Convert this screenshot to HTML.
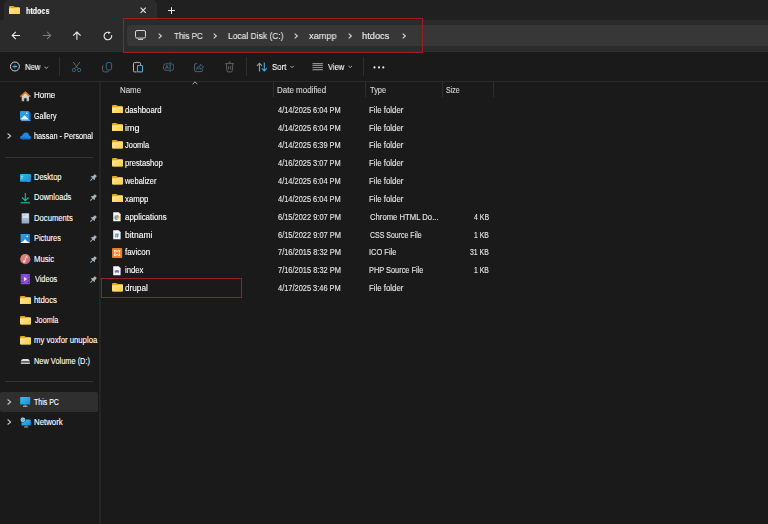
<!DOCTYPE html>
<html><head><meta charset="utf-8"><style>
html,body{margin:0;padding:0;}
body{width:768px;height:524px;overflow:hidden;background:#1a1a1a;position:relative;font-family:"Liberation Sans",sans-serif;}
body>div,body>svg{position:absolute;}
.t{white-space:nowrap;line-height:normal;-webkit-text-stroke:0.12px currentColor;}
</style></head><body>
<svg width="0" height="0" style="position:absolute"><defs><linearGradient id="fg" x1="0" y1="0" x2="1" y2="1"><stop offset="0" stop-color="#ffe79a"/><stop offset="1" stop-color="#fccf4a"/></linearGradient><linearGradient id="dg" x1="0" y1="0" x2="1" y2="1"><stop offset="0" stop-color="#2bc4ec"/><stop offset="1" stop-color="#1a86d6"/></linearGradient><linearGradient id="pg" x1="0" y1="0" x2="1" y2="1"><stop offset="0" stop-color="#2cc8ef"/><stop offset="1" stop-color="#1a8ada"/></linearGradient><linearGradient id="mg" x1="0" y1="0" x2="1" y2="1"><stop offset="0" stop-color="#f39056"/><stop offset="1" stop-color="#c25a9e"/></linearGradient><linearGradient id="docg" x1="0" y1="0" x2="0" y2="1"><stop offset="0" stop-color="#c3d1e3"/><stop offset="1" stop-color="#8ea5c2"/></linearGradient><linearGradient id="picg" x1="0" y1="0" x2="1" y2="1"><stop offset="0" stop-color="#2aa6ec"/><stop offset="1" stop-color="#1679d2"/></linearGradient><linearGradient id="hg" x1="0" y1="0" x2="0" y2="1"><stop offset="0" stop-color="#e6e6e6"/><stop offset="1" stop-color="#b4b4b4"/></linearGradient></defs></svg>
<div style="left:0px;top:0px;width:768px;height:20px;background:#202020;"></div>
<div style="left:3.7px;top:0px;width:153.7px;height:21px;background:#2b2b2b;border-radius:5px 5px 0 0;"></div>
<div style="left:0px;top:12px;width:10px;height:9px;background:#2b2b2b;"></div>
<div style="left:0px;top:0px;width:3.7px;height:19.6px;background:#202020;border-radius:0 0 3px 0;"></div>
<div style="left:0px;top:20px;width:768px;height:32px;background:#2b2b2b;"></div>
<div style="left:0px;top:51px;width:768px;height:1px;background:#2f2f2f;"></div>
<div style="left:127.2px;top:25.2px;width:641px;height:20.6px;background:#373737;border-radius:4px 0 0 4px;"></div>
<div style="left:99px;top:82px;width:2px;height:442px;background:linear-gradient(90deg,#272727,#212121);"></div>
<div style="left:0px;top:81px;width:768px;height:1px;background:#2b2b2b;"></div>
<svg style="left:9.3px;top:5.5px" width="11" height="8.5" viewBox="0 0 11 8.5"><path d="M0 1.1 Q0 0 1.1 0 H4.3 Q4.9 0 5.3 0.5 L5.7 1.2 H9.9 Q11 1.2 11 2.3 V7.4 Q11 8.5 9.9 8.5 H1.1 Q0 8.5 0 7.4Z" fill="#e9a90a"/><path d="M0 3.2 Q0 2.2 1 2.2 H4.9 L5.9 1.5 H10 Q11 1.5 11 2.5 V7.5 Q11 8.5 10 8.5 H1 Q0 8.5 0 7.5Z" fill="url(#fg)"/></svg>
<div class="t" style="left:26.20px;top:5.62px;font-size:8.6px;font-weight:700;color:#ffffff;transform:scaleX(0.8309);transform-origin:0 0;will-change:transform;">htdocs</div>
<svg style="left:140px;top:7px" width="7" height="7" viewBox="0 0 7 7"><path d="M0.6 0.6 L5.8 5.8 M5.8 0.6 L0.6 5.8" stroke="#e8e8e8" stroke-width="1.1"/></svg>
<svg style="left:167px;top:7px" width="8" height="8" viewBox="0 0 8 8"><path d="M4.5 0.2 V7 M1 3.5 H7.9" stroke="#e8e8e8" stroke-width="1"/></svg>
<svg style="left:11px;top:31px" width="10" height="9" viewBox="0 0 10 9"><path d="M1.2 4.5 H9 M4.8 0.9 L1.2 4.5 L4.8 8.1" stroke="#ececec" stroke-width="1.1" fill="none"/></svg>
<svg style="left:42px;top:31px" width="10" height="9" viewBox="0 0 10 9"><path d="M0.8 4.5 H8.7 M5.1 0.9 L8.7 4.5 L5.1 8.1" stroke="#7a7a7a" stroke-width="1.1" fill="none"/></svg>
<svg style="left:72px;top:31px" width="10" height="10" viewBox="0 0 10 10"><path d="M4.9 1.2 V8.8 M1.2 4.7 L4.9 1.0 L8.6 4.7" stroke="#ececec" stroke-width="1.1" fill="none"/></svg>
<svg style="left:103px;top:31px" width="10" height="10" viewBox="0 0 10 10"><path d="M4.9 1.2 A3.8 3.8 0 1 0 8.6 4.2" stroke="#ececec" stroke-width="1.1" fill="none"/><path d="M4.9 0.4 L7.9 1.3 L5.4 3.2Z" fill="#ececec"/></svg>
<svg style="left:134.7px;top:29.7px" width="11" height="10.5" viewBox="0 0 11 10.5"><rect x="0.5" y="0.5" width="10" height="7.6" rx="1.5" stroke="#d8d8d8" stroke-width="1" fill="none"/><path d="M3 9.6 H8" stroke="#d8d8d8" stroke-width="1"/></svg>
<svg style="left:157.6px;top:32.8px" width="5" height="7" viewBox="0 0 5 7"><path d="M0.7 0.6 L3.4 3.0 L0.7 5.4" stroke="#dcdcdc" stroke-width="1.05" fill="none"/></svg>
<svg style="left:213.2px;top:32.8px" width="5" height="7" viewBox="0 0 5 7"><path d="M0.7 0.6 L3.4 3.0 L0.7 5.4" stroke="#dcdcdc" stroke-width="1.05" fill="none"/></svg>
<svg style="left:294.3px;top:32.8px" width="5" height="7" viewBox="0 0 5 7"><path d="M0.7 0.6 L3.4 3.0 L0.7 5.4" stroke="#dcdcdc" stroke-width="1.05" fill="none"/></svg>
<svg style="left:348px;top:32.8px" width="5" height="7" viewBox="0 0 5 7"><path d="M0.7 0.6 L3.4 3.0 L0.7 5.4" stroke="#dcdcdc" stroke-width="1.05" fill="none"/></svg>
<svg style="left:401.6px;top:32.8px" width="5" height="7" viewBox="0 0 5 7"><path d="M0.7 0.6 L3.4 3.0 L0.7 5.4" stroke="#dcdcdc" stroke-width="1.05" fill="none"/></svg>
<div class="t" style="left:173.83px;top:30.58px;font-size:9.3px;font-weight:400;color:#ececec;transform:scaleX(0.8708);transform-origin:0 0;will-change:transform;">This PC</div>
<div class="t" style="left:227.97px;top:30.58px;font-size:9.3px;font-weight:400;color:#ececec;transform:scaleX(0.9111);transform-origin:0 0;will-change:transform;">Local Disk (C:)</div>
<div class="t" style="left:309.00px;top:30.58px;font-size:9.3px;font-weight:400;color:#ececec;transform:scaleX(0.9854);transform-origin:0 0;will-change:transform;">xampp</div>
<div class="t" style="left:362.30px;top:30.58px;font-size:9.3px;font-weight:400;color:#ececec;transform:scaleX(0.9962);transform-origin:0 0;will-change:transform;">htdocs</div>
<div style="left:122.9px;top:18.0px;width:300.4px;height:35.1px;background:transparent;border:1.5px solid #981f23;box-sizing:border-box;"></div>
<svg style="left:9px;top:61px" width="12" height="12" viewBox="0 0 12 12"><circle cx="5.9" cy="5.5" r="4.5" stroke="#cfcfcf" stroke-width="1" fill="none"/><path d="M5.9 3.4 V7.6" stroke="#2f7fb0" stroke-width="1"/><path d="M3.6 5.5 H8.2" stroke="#46a8e0" stroke-width="1.3"/></svg>
<div class="t" style="left:25.11px;top:61.81px;font-size:8.5px;font-weight:400;color:#ffffff;transform:scaleX(0.9080);transform-origin:0 0;will-change:transform;">New</div>
<svg style="left:44.4px;top:65.5px" width="5" height="4" viewBox="0 0 5 4"><path d="M0.4 0.6 L2.2 2.6 L4 0.6" stroke="#cfcfcf" stroke-width="0.8" fill="none"/></svg>
<div style="left:59.3px;top:57px;width:1px;height:19px;background:#2e2e2e;"></div>
<svg style="left:71px;top:61px" width="11" height="12" viewBox="0 0 11 12"><path d="M2.2 1 L6.6 7.2 M8.8 1 L4.4 7.2" stroke="#6c6c6c" stroke-width="0.9" fill="none"/><circle cx="2.9" cy="9" r="1.65" stroke="#2b6a8a" stroke-width="1" fill="none"/><circle cx="8.1" cy="9" r="1.65" stroke="#2b6a8a" stroke-width="1" fill="none"/></svg>
<svg style="left:101px;top:61px" width="12" height="12" viewBox="0 0 12 12"><path d="M2.6 4 Q1.5 4.6 1.5 6 V8.6 Q1.5 10.9 3.8 10.9 H6.3 Q7.6 10.9 8.3 10" stroke="#5f5f5f" stroke-width="1" fill="none"/><rect x="5.3" y="1.5" width="5.3" height="7.6" rx="1.8" stroke="#2d6f8e" stroke-width="1" fill="none"/></svg>
<svg style="left:132px;top:61px" width="12" height="12" viewBox="0 0 12 12"><path d="M3.2 1.5 H2.6 Q1.5 1.5 1.5 2.6 V9.9 Q1.5 10.9 2.5 10.9 H4.6 M6.8 1.5 H7.5 Q8.5 1.5 8.5 2.6 V3.9" stroke="#bdbdbd" stroke-width="1" fill="none"/><path d="M3 1.9 Q5 0.3 7 1.9" stroke="#bdbdbd" stroke-width="1" fill="none"/><rect x="5.5" y="4.5" width="5" height="6.4" rx="0.7" stroke="#46a6d8" stroke-width="1.1" fill="none"/></svg>
<svg style="left:162px;top:61px" width="12" height="12" viewBox="0 0 12 12"><rect x="1.5" y="2.8" width="10.3" height="6.6" rx="2.4" stroke="#5a5a5a" stroke-width="1" fill="none"/><path d="M8.1 1 V11" stroke="#1c1c1c" stroke-width="2"/><path d="M8.1 1 V11" stroke="#2d6a8a" stroke-width="1.1"/><path d="M3.4 8 L4.9 4.2 L6.4 8 M3.9 6.8 H5.9" stroke="#2d6a8a" stroke-width="0.9" fill="none"/></svg>
<svg style="left:193px;top:61px" width="12" height="12" viewBox="0 0 12 12"><path d="M4.2 2.6 H3 Q1.5 2.6 1.5 4.1 V9.1 Q1.5 10.6 3 10.6 H8 Q9.5 10.6 9.5 9.1 V8.2" stroke="#5c5c5c" stroke-width="1" fill="none"/><path d="M3.4 8.4 Q3.8 5.3 7.3 5 V3.4 L10.6 5.9 L7.3 8.3 V6.8 Q5 6.8 3.4 8.4Z" stroke="#2d6a8a" stroke-width="0.9" fill="none" stroke-linejoin="round"/></svg>
<svg style="left:224px;top:61px" width="12" height="12" viewBox="0 0 12 12"><path d="M1.2 2.6 H10 M4.3 2.4 Q4.6 0.8 5.6 0.8 Q6.6 0.8 6.9 2.4 M2.3 2.8 L3 10 Q3.1 10.9 4 10.9 H7.2 Q8.1 10.9 8.2 10 L8.9 2.8 M4.6 5.2 V8.4 M6.6 5.2 V8.4" stroke="#5e5e5e" stroke-width="1" fill="none"/></svg>
<div style="left:246.3px;top:57px;width:1px;height:19px;background:#2e2e2e;"></div>
<svg style="left:256px;top:62px" width="12" height="11" viewBox="0 0 12 11"><path d="M3.5 9.6 V1.4 M1 3.8 L3.5 1.2 L6 3.8" stroke="#9a9a9a" stroke-width="1.1" fill="none"/><path d="M8.3 0.6 V8.8 M5.8 6.4 L8.3 9 L10.8 6.4" stroke="#3fa8e0" stroke-width="1.1" fill="none"/></svg>
<div class="t" style="left:272.13px;top:61.81px;font-size:8.5px;font-weight:400;color:#ffffff;transform:scaleX(0.9139);transform-origin:0 0;will-change:transform;">Sort</div>
<svg style="left:290px;top:65px" width="5" height="4" viewBox="0 0 5 4"><path d="M0.4 0.9 L2.1 2.6 L3.8 0.9" stroke="#cfcfcf" stroke-width="0.8" fill="none"/></svg>
<svg style="left:312px;top:63px" width="12" height="9" viewBox="0 0 12 9"><path d="M0.5 0.6 H10.9 M0.5 2.5 H10.9 M0.5 4.5 H10.9 M0.5 6.6 H10.9" stroke="#8e8e8e" stroke-width="1.1" fill="none"/></svg>
<div class="t" style="left:328.11px;top:61.81px;font-size:8.5px;font-weight:400;color:#ffffff;transform:scaleX(0.8791);transform-origin:0 0;will-change:transform;">View</div>
<svg style="left:348px;top:65px" width="5" height="4" viewBox="0 0 5 4"><path d="M0.4 0.9 L2.2 2.6 L4 0.9" stroke="#cfcfcf" stroke-width="0.8" fill="none"/></svg>
<div style="left:363px;top:57px;width:1px;height:19px;background:#2e2e2e;"></div>
<svg style="left:373px;top:65px" width="13" height="5" viewBox="0 0 13 5"><circle cx="1.5" cy="2.4" r="1.05" fill="#f0f0f0"/><circle cx="6.0" cy="2.4" r="1.05" fill="#f0f0f0"/><circle cx="10.3" cy="2.4" r="1.05" fill="#f0f0f0"/></svg>
<div style="left:0px;top:391.5px;width:98.1px;height:20px;background:#2f2f2f;border-radius:2px;"></div>
<div style="left:5.2px;top:156.9px;width:88px;height:0.9px;background:#333;"></div>
<div style="left:5.2px;top:381.1px;width:88px;height:0.9px;background:#333;"></div>
<svg style="left:20.2px;top:90.95px" width="11" height="11" viewBox="0 0 11 11"><path d="M1.7 5.4 L5.4 2.1 L9.1 5.4 V9.6 Q9.1 10.2 8.5 10.2 H6.6 V7.3 H4.2 V10.2 H2.3 Q1.7 10.2 1.7 9.6Z" fill="url(#hg)"/><path d="M5.4 0.3 L10.9 5.1 L9.9 6.2 L5.4 2.3 L0.9 6.2 L-0.1 5.1Z" fill="#f07a1c"/></svg>
<div class="t" style="left:33.93px;top:90.34px;font-size:8.3px;font-weight:400;color:#ffffff;transform:scaleX(0.9621);transform-origin:0 0;">Home</div>
<svg style="left:20.2px;top:110.97px" width="11" height="11" viewBox="0 0 11 11"><rect x="1.4" y="1.2" width="9.3" height="8.8" rx="0.8" fill="#1565b8"/><rect x="0" y="0" width="9.2" height="8.8" rx="0.8" fill="#2a9ae6"/><path d="M0.3 8.4 L4.6 4.2 L8.9 8.4Z" fill="#ffffff"/><circle cx="6.8" cy="2.2" r="0.8" fill="#fff"/><path d="M1 9.6 H10.4" stroke="#8fd0ff" stroke-width="0.6"/></svg>
<div class="t" style="left:34.26px;top:110.76px;font-size:8.3px;font-weight:400;color:#ffffff;transform:scaleX(0.8533);transform-origin:0 0;">Gallery</div>
<svg style="left:20.2px;top:131.09px" width="11" height="11" viewBox="0 0 11 11"><path d="M2.3 8.3 Q0 8.3 0.1 6.3 Q0.3 4.6 2.3 4.5 Q3.2 1.5 6.1 1.4 Q8.8 1.5 9.3 4.4 Q10.9 4.7 10.9 6.4 Q10.8 8.3 9 8.3Z" fill="#1f88e3"/><path d="M2.3 8.3 Q0 8.3 0.1 6.3 Q2 5.8 4.5 6.6 Q7 7.6 10.6 7.4 Q10.2 8.3 9 8.3Z" fill="#1570c8"/></svg>
<div class="t" style="left:34.07px;top:131.18px;font-size:8.3px;font-weight:400;color:#ffffff;transform:scaleX(0.8798);transform-origin:0 0;">hassan - Personal</div>
<svg style="left:7px;top:133.49px" width="5" height="7" viewBox="0 0 5 7"><path d="M0.6 0.5 L3.7 3.0 L0.6 5.5" stroke="#c4c4c4" stroke-width="1.05" fill="none"/></svg>
<svg style="left:20.2px;top:171.63px" width="11" height="11" viewBox="0 0 11 11"><rect x="0" y="2.0" width="10.9" height="7.7" rx="1" fill="url(#dg)"/><circle cx="2" cy="4.3" r="0.6" fill="#fff"/><circle cx="2" cy="6.2" r="0.6" fill="#fff"/><path d="M7.4 9.1 H9.6" stroke="#9ad8f5" stroke-width="0.5"/></svg>
<div class="t" style="left:33.97px;top:172.02px;font-size:8.3px;font-weight:400;color:#ffffff;transform:scaleX(0.9048);transform-origin:0 0;">Desktop</div>
<svg style="left:89px;top:173.93px" width="8" height="8" viewBox="0 0 8 8"><g transform="translate(4.1 3.9) rotate(45)"><rect x="-1.4" y="-3.9" width="2.8" height="3.4" rx="0.5" fill="#a9b2bb"/><path d="M-2.8 0.7 L-1.8 -1.0 H1.8 L2.8 0.7Z" fill="#a9b2bb"/><path d="M0 0.5 V3.9" stroke="#a9b2bb" stroke-width="1"/></g></svg>
<svg style="left:20.2px;top:192.55px" width="11" height="11" viewBox="0 0 11 11"><path d="M5.3 0 V7.6 M2 4.5 L5.3 7.7 L8.6 4.5" stroke="#1fb89a" stroke-width="1.1" fill="none"/><path d="M0.6 9.8 H10" stroke="#1fb89a" stroke-width="1.2"/></svg>
<div class="t" style="left:33.96px;top:192.44px;font-size:8.3px;font-weight:400;color:#ffffff;transform:scaleX(0.9102);transform-origin:0 0;">Downloads</div>
<svg style="left:89px;top:194.35000000000002px" width="8" height="8" viewBox="0 0 8 8"><g transform="translate(4.1 3.9) rotate(45)"><rect x="-1.4" y="-3.9" width="2.8" height="3.4" rx="0.5" fill="#a9b2bb"/><path d="M-2.8 0.7 L-1.8 -1.0 H1.8 L2.8 0.7Z" fill="#a9b2bb"/><path d="M0 0.5 V3.9" stroke="#a9b2bb" stroke-width="1"/></g></svg>
<svg style="left:20.2px;top:212.77px" width="11" height="11" viewBox="0 0 11 11"><rect x="1.6" y="0.3" width="7.6" height="10.1" rx="0.5" fill="url(#docg)"/><rect x="2.6" y="3.4" width="5.6" height="1.2" fill="#eef3fa"/><rect x="2.6" y="1.4" width="3" height="0.8" fill="#dfe8f3"/><rect x="6.2" y="1.5" width="1.8" height="1" fill="#ffffff"/></svg>
<div class="t" style="left:33.95px;top:212.86px;font-size:8.3px;font-weight:400;color:#ffffff;transform:scaleX(0.9244);transform-origin:0 0;">Documents</div>
<svg style="left:89px;top:214.77px" width="8" height="8" viewBox="0 0 8 8"><g transform="translate(4.1 3.9) rotate(45)"><rect x="-1.4" y="-3.9" width="2.8" height="3.4" rx="0.5" fill="#a9b2bb"/><path d="M-2.8 0.7 L-1.8 -1.0 H1.8 L2.8 0.7Z" fill="#a9b2bb"/><path d="M0 0.5 V3.9" stroke="#a9b2bb" stroke-width="1"/></g></svg>
<svg style="left:20.2px;top:233.79px" width="11" height="11" viewBox="0 0 11 11"><rect x="0.6" y="0" width="9.3" height="9.1" rx="0.7" fill="url(#picg)"/><path d="M0.9 8.6 Q3.5 8 5.1 5.1 Q6.7 8 9.6 8.6 V8.4 Q9.6 9.1 8.9 9.1 H1.6 Q0.9 9.1 0.9 8.4Z" fill="#fff"/><circle cx="7.2" cy="2.3" r="0.85" fill="#eaf6ff"/></svg>
<div class="t" style="left:33.97px;top:233.28px;font-size:8.3px;font-weight:400;color:#ffffff;transform:scaleX(0.8966);transform-origin:0 0;">Pictures</div>
<svg style="left:89px;top:235.19px" width="8" height="8" viewBox="0 0 8 8"><g transform="translate(4.1 3.9) rotate(45)"><rect x="-1.4" y="-3.9" width="2.8" height="3.4" rx="0.5" fill="#a9b2bb"/><path d="M-2.8 0.7 L-1.8 -1.0 H1.8 L2.8 0.7Z" fill="#a9b2bb"/><path d="M0 0.5 V3.9" stroke="#a9b2bb" stroke-width="1"/></g></svg>
<svg style="left:20.2px;top:253.91px" width="11" height="11" viewBox="0 0 11 11"><circle cx="5.3" cy="5.2" r="5.1" fill="url(#mg)"/><path d="M4.6 7.6 L6.5 2.3 L7.6 3.2" stroke="#fff" stroke-width="0.8" fill="none"/><circle cx="4.2" cy="7.5" r="1.1" fill="#fff"/></svg>
<div class="t" style="left:33.95px;top:253.70px;font-size:8.3px;font-weight:400;color:#ffffff;transform:scaleX(0.9324);transform-origin:0 0;">Music</div>
<svg style="left:89px;top:255.61px" width="8" height="8" viewBox="0 0 8 8"><g transform="translate(4.1 3.9) rotate(45)"><rect x="-1.4" y="-3.9" width="2.8" height="3.4" rx="0.5" fill="#a9b2bb"/><path d="M-2.8 0.7 L-1.8 -1.0 H1.8 L2.8 0.7Z" fill="#a9b2bb"/><path d="M0 0.5 V3.9" stroke="#a9b2bb" stroke-width="1"/></g></svg>
<svg style="left:20.2px;top:273.73px" width="11" height="11" viewBox="0 0 11 11"><rect x="0.7" y="0" width="9.2" height="10.2" rx="0.6" fill="#8d4bdc"/><g fill="#3b1f66"><circle cx="2" cy="1.8" r="0.55"/><circle cx="2" cy="5.1" r="0.55"/><circle cx="2" cy="8.4" r="0.55"/><circle cx="8.6" cy="1.8" r="0.55"/><circle cx="8.6" cy="5.1" r="0.55"/><circle cx="8.6" cy="8.4" r="0.55"/></g><path d="M4 3 L7.2 5.1 L4 7.2Z" fill="#eadcff"/></svg>
<div class="t" style="left:34.51px;top:274.12px;font-size:8.3px;font-weight:400;color:#ffffff;transform:scaleX(0.8790);transform-origin:0 0;">Videos</div>
<svg style="left:89px;top:276.03000000000003px" width="8" height="8" viewBox="0 0 8 8"><g transform="translate(4.1 3.9) rotate(45)"><rect x="-1.4" y="-3.9" width="2.8" height="3.4" rx="0.5" fill="#a9b2bb"/><path d="M-2.8 0.7 L-1.8 -1.0 H1.8 L2.8 0.7Z" fill="#a9b2bb"/><path d="M0 0.5 V3.9" stroke="#a9b2bb" stroke-width="1"/></g></svg>
<svg style="left:20.2px;top:295.65000000000003px" width="11" height="8.5" viewBox="0 0 11 8.5"><path d="M0 1.1 Q0 0 1.1 0 H4.3 Q4.9 0 5.3 0.5 L5.7 1.2 H9.9 Q11 1.2 11 2.3 V7.4 Q11 8.5 9.9 8.5 H1.1 Q0 8.5 0 7.4Z" fill="#e9a90a"/><path d="M0 3.2 Q0 2.2 1 2.2 H4.9 L5.9 1.5 H10 Q11 1.5 11 2.5 V7.5 Q11 8.5 10 8.5 H1 Q0 8.5 0 7.5Z" fill="url(#fg)"/></svg>
<div class="t" style="left:34.04px;top:294.54px;font-size:8.3px;font-weight:400;color:#ffffff;transform:scaleX(0.9407);transform-origin:0 0;">htdocs</div>
<svg style="left:20.2px;top:316.07px" width="11" height="8.5" viewBox="0 0 11 8.5"><path d="M0 1.1 Q0 0 1.1 0 H4.3 Q4.9 0 5.3 0.5 L5.7 1.2 H9.9 Q11 1.2 11 2.3 V7.4 Q11 8.5 9.9 8.5 H1.1 Q0 8.5 0 7.4Z" fill="#e9a90a"/><path d="M0 3.2 Q0 2.2 1 2.2 H4.9 L5.9 1.5 H10 Q11 1.5 11 2.5 V7.5 Q11 8.5 10 8.5 H1 Q0 8.5 0 7.5Z" fill="url(#fg)"/></svg>
<div class="t" style="left:34.51px;top:314.96px;font-size:8.3px;font-weight:400;color:#ffffff;transform:scaleX(0.8727);transform-origin:0 0;">Joomla</div>
<svg style="left:20.2px;top:336.49px" width="11" height="8.5" viewBox="0 0 11 8.5"><path d="M0 1.1 Q0 0 1.1 0 H4.3 Q4.9 0 5.3 0.5 L5.7 1.2 H9.9 Q11 1.2 11 2.3 V7.4 Q11 8.5 9.9 8.5 H1.1 Q0 8.5 0 7.4Z" fill="#e9a90a"/><path d="M0 3.2 Q0 2.2 1 2.2 H4.9 L5.9 1.5 H10 Q11 1.5 11 2.5 V7.5 Q11 8.5 10 8.5 H1 Q0 8.5 0 7.5Z" fill="url(#fg)"/></svg>
<div class="t" style="left:34.04px;top:335.38px;font-size:8.3px;font-weight:400;color:#ffffff;transform:scaleX(0.9330);transform-origin:0 0;">my voxfor unuploa</div>
<svg style="left:20.2px;top:355.31px" width="11" height="11" viewBox="0 0 11 11"><path d="M0.8 6.5 Q0.8 6.0 1.2 5.4 L1.9 4.5 Q2.3 4.0 3 4.0 H7.7 Q8.4 4.0 8.8 4.5 L9.5 5.4 Q9.9 6.0 9.9 6.5Z" fill="#e2e2e2"/><rect x="0.8" y="6.4" width="9.1" height="1.1" fill="#505050"/><circle cx="2.7" cy="6.95" r="0.5" fill="#38b26a"/><path d="M0.8 7.5 H9.9 V8.5 Q9.9 9.1 9.3 9.1 H1.4 Q0.8 9.1 0.8 8.5Z" fill="#c2c2c2"/></svg>
<div class="t" style="left:33.98px;top:355.80px;font-size:8.3px;font-weight:400;color:#ffffff;transform:scaleX(0.8927);transform-origin:0 0;">New Volume (D:)</div>
<svg style="left:20.2px;top:396.55px" width="11" height="11" viewBox="0 0 11 11"><rect x="0.2" y="0" width="10" height="7.6" rx="0.6" fill="url(#pg)"/><path d="M5.2 7.6 V8.9" stroke="#d0d0d0" stroke-width="0.8"/><path d="M3 9.3 H7.4" stroke="#e0e0e0" stroke-width="0.8"/></svg>
<div class="t" style="left:34.43px;top:396.64px;font-size:8.3px;font-weight:400;color:#ffffff;transform:scaleX(0.8448);transform-origin:0 0;">This PC</div>
<svg style="left:7px;top:398.95px" width="5" height="7" viewBox="0 0 5 7"><path d="M0.6 0.5 L3.7 3.0 L0.6 5.5" stroke="#c4c4c4" stroke-width="1.05" fill="none"/></svg>
<svg style="left:20.2px;top:416.77000000000004px" width="11" height="11" viewBox="0 0 11 11"><rect x="1.6" y="2.4" width="9.1" height="6.2" rx="0.6" fill="url(#pg)"/><path d="M6.1 8.6 V9.6" stroke="#d0d0d0" stroke-width="0.8"/><path d="M4 10 H8.2" stroke="#e0e0e0" stroke-width="0.7"/><circle cx="2.9" cy="2.8" r="2.7" fill="#1a1a1a"/><circle cx="2.9" cy="2.8" r="2.35" fill="#a6dcf7"/><path d="M0.7 2.3 Q2.9 3.9 5.1 2.3 M2.9 0.5 Q1.6 2.8 2.9 5.1 M2.9 0.5 Q4.2 2.8 2.9 5.1" stroke="#4a9ad0" stroke-width="0.45" fill="none"/></svg>
<div class="t" style="left:33.94px;top:417.06px;font-size:8.3px;font-weight:400;color:#ffffff;transform:scaleX(0.9428);transform-origin:0 0;">Network</div>
<svg style="left:7px;top:419.37px" width="5" height="7" viewBox="0 0 5 7"><path d="M0.6 0.5 L3.7 3.0 L0.6 5.5" stroke="#c4c4c4" stroke-width="1.05" fill="none"/></svg>
<div class="t" style="left:119.53px;top:85.09px;font-size:8.3px;font-weight:400;color:#d6d6d6;transform:scaleX(0.9526);transform-origin:0 0;">Name</div>
<svg style="left:192px;top:81px" width="6" height="4" viewBox="0 0 6 4"><path d="M0.6 3.2 L3 0.9 L5.4 3.2" stroke="#bdbdbd" stroke-width="0.9" fill="none"/></svg>
<div style="left:273.3px;top:82px;width:1px;height:15px;background:#2e2e2e;"></div>
<div style="left:365.1px;top:82px;width:1px;height:15px;background:#2e2e2e;"></div>
<div style="left:441.8px;top:82px;width:1px;height:15px;background:#2e2e2e;"></div>
<div style="left:493.1px;top:82px;width:1px;height:15px;background:#2e2e2e;"></div>
<div class="t" style="left:277.33px;top:84.89px;font-size:8.3px;font-weight:400;color:#d6d6d6;transform:scaleX(0.9620);transform-origin:0 0;">Date modified</div>
<div class="t" style="left:370.02px;top:84.89px;font-size:8.3px;font-weight:400;color:#d6d6d6;transform:scaleX(0.8966);transform-origin:0 0;">Type</div>
<div class="t" style="left:445.91px;top:84.89px;font-size:8.3px;font-weight:400;color:#d6d6d6;transform:scaleX(0.8506);transform-origin:0 0;">Size</div>
<svg style="left:111.8px;top:104.7px" width="11" height="8.5" viewBox="0 0 11 8.5"><path d="M0 1.1 Q0 0 1.1 0 H4.3 Q4.9 0 5.3 0.5 L5.7 1.2 H9.9 Q11 1.2 11 2.3 V7.4 Q11 8.5 9.9 8.5 H1.1 Q0 8.5 0 7.4Z" fill="#e9a90a"/><path d="M0 3.2 Q0 2.2 1 2.2 H4.9 L5.9 1.5 H10 Q11 1.5 11 2.5 V7.5 Q11 8.5 10 8.5 H1 Q0 8.5 0 7.5Z" fill="url(#fg)"/></svg>
<div class="t" style="left:124.92px;top:104.69px;font-size:8.3px;font-weight:400;color:#ffffff;transform:scaleX(0.9323);transform-origin:0 0;">dashboard</div>
<div class="t" style="left:277.92px;top:104.69px;font-size:8.3px;font-weight:400;color:#e6e6e6;transform:scaleX(0.8947);transform-origin:0 0;">4/14/2025 6:04 PM</div>
<div class="t" style="left:369.24px;top:104.69px;font-size:8.3px;font-weight:400;color:#e6e6e6;transform:scaleX(0.9438);transform-origin:0 0;">File folder</div>
<svg style="left:111.8px;top:122.55000000000001px" width="11" height="8.5" viewBox="0 0 11 8.5"><path d="M0 1.1 Q0 0 1.1 0 H4.3 Q4.9 0 5.3 0.5 L5.7 1.2 H9.9 Q11 1.2 11 2.3 V7.4 Q11 8.5 9.9 8.5 H1.1 Q0 8.5 0 7.4Z" fill="#e9a90a"/><path d="M0 3.2 Q0 2.2 1 2.2 H4.9 L5.9 1.5 H10 Q11 1.5 11 2.5 V7.5 Q11 8.5 10 8.5 H1 Q0 8.5 0 7.5Z" fill="url(#fg)"/></svg>
<div class="t" style="left:124.66px;top:122.54px;font-size:8.3px;font-weight:400;color:#ffffff;transform:scaleX(1.0813);transform-origin:0 0;">img</div>
<div class="t" style="left:277.92px;top:122.54px;font-size:8.3px;font-weight:400;color:#e6e6e6;transform:scaleX(0.8947);transform-origin:0 0;">4/14/2025 6:04 PM</div>
<div class="t" style="left:369.24px;top:122.54px;font-size:8.3px;font-weight:400;color:#e6e6e6;transform:scaleX(0.9438);transform-origin:0 0;">File folder</div>
<svg style="left:111.8px;top:140.4px" width="11" height="8.5" viewBox="0 0 11 8.5"><path d="M0 1.1 Q0 0 1.1 0 H4.3 Q4.9 0 5.3 0.5 L5.7 1.2 H9.9 Q11 1.2 11 2.3 V7.4 Q11 8.5 9.9 8.5 H1.1 Q0 8.5 0 7.4Z" fill="#e9a90a"/><path d="M0 3.2 Q0 2.2 1 2.2 H4.9 L5.9 1.5 H10 Q11 1.5 11 2.5 V7.5 Q11 8.5 10 8.5 H1 Q0 8.5 0 7.5Z" fill="url(#fg)"/></svg>
<div class="t" style="left:125.11px;top:140.39px;font-size:8.3px;font-weight:400;color:#ffffff;transform:scaleX(0.8989);transform-origin:0 0;">Joomla</div>
<div class="t" style="left:277.92px;top:140.39px;font-size:8.3px;font-weight:400;color:#e6e6e6;transform:scaleX(0.8947);transform-origin:0 0;">4/14/2025 6:39 PM</div>
<div class="t" style="left:369.24px;top:140.39px;font-size:8.3px;font-weight:400;color:#e6e6e6;transform:scaleX(0.9438);transform-origin:0 0;">File folder</div>
<svg style="left:111.8px;top:158.25px" width="11" height="8.5" viewBox="0 0 11 8.5"><path d="M0 1.1 Q0 0 1.1 0 H4.3 Q4.9 0 5.3 0.5 L5.7 1.2 H9.9 Q11 1.2 11 2.3 V7.4 Q11 8.5 9.9 8.5 H1.1 Q0 8.5 0 7.4Z" fill="#e9a90a"/><path d="M0 3.2 Q0 2.2 1 2.2 H4.9 L5.9 1.5 H10 Q11 1.5 11 2.5 V7.5 Q11 8.5 10 8.5 H1 Q0 8.5 0 7.5Z" fill="url(#fg)"/></svg>
<div class="t" style="left:124.74px;top:158.24px;font-size:8.3px;font-weight:400;color:#ffffff;transform:scaleX(0.9204);transform-origin:0 0;">prestashop</div>
<div class="t" style="left:277.92px;top:158.24px;font-size:8.3px;font-weight:400;color:#e6e6e6;transform:scaleX(0.8947);transform-origin:0 0;">4/16/2025 3:07 PM</div>
<div class="t" style="left:369.24px;top:158.24px;font-size:8.3px;font-weight:400;color:#e6e6e6;transform:scaleX(0.9438);transform-origin:0 0;">File folder</div>
<svg style="left:111.8px;top:176.1px" width="11" height="8.5" viewBox="0 0 11 8.5"><path d="M0 1.1 Q0 0 1.1 0 H4.3 Q4.9 0 5.3 0.5 L5.7 1.2 H9.9 Q11 1.2 11 2.3 V7.4 Q11 8.5 9.9 8.5 H1.1 Q0 8.5 0 7.4Z" fill="#e9a90a"/><path d="M0 3.2 Q0 2.2 1 2.2 H4.9 L5.9 1.5 H10 Q11 1.5 11 2.5 V7.5 Q11 8.5 10 8.5 H1 Q0 8.5 0 7.5Z" fill="url(#fg)"/></svg>
<div class="t" style="left:125.20px;top:176.09px;font-size:8.3px;font-weight:400;color:#ffffff;transform:scaleX(0.8968);transform-origin:0 0;">webalizer</div>
<div class="t" style="left:277.92px;top:176.09px;font-size:8.3px;font-weight:400;color:#e6e6e6;transform:scaleX(0.8947);transform-origin:0 0;">4/14/2025 6:04 PM</div>
<div class="t" style="left:369.24px;top:176.09px;font-size:8.3px;font-weight:400;color:#e6e6e6;transform:scaleX(0.9438);transform-origin:0 0;">File folder</div>
<svg style="left:111.8px;top:193.95000000000002px" width="11" height="8.5" viewBox="0 0 11 8.5"><path d="M0 1.1 Q0 0 1.1 0 H4.3 Q4.9 0 5.3 0.5 L5.7 1.2 H9.9 Q11 1.2 11 2.3 V7.4 Q11 8.5 9.9 8.5 H1.1 Q0 8.5 0 7.4Z" fill="#e9a90a"/><path d="M0 3.2 Q0 2.2 1 2.2 H4.9 L5.9 1.5 H10 Q11 1.5 11 2.5 V7.5 Q11 8.5 10 8.5 H1 Q0 8.5 0 7.5Z" fill="url(#fg)"/></svg>
<div class="t" style="left:125.11px;top:193.94px;font-size:8.3px;font-weight:400;color:#ffffff;transform:scaleX(0.9347);transform-origin:0 0;">xampp</div>
<div class="t" style="left:277.92px;top:193.94px;font-size:8.3px;font-weight:400;color:#e6e6e6;transform:scaleX(0.8947);transform-origin:0 0;">4/14/2025 6:04 PM</div>
<div class="t" style="left:369.24px;top:193.94px;font-size:8.3px;font-weight:400;color:#e6e6e6;transform:scaleX(0.9438);transform-origin:0 0;">File folder</div>
<svg style="left:113.4px;top:212.0px" width="11" height="10" viewBox="0 0 11 10"><path d="M0.2 0.2 H5.6 L7.6 2.2 V9.3 H0.2Z" fill="#f7f7f7"/><path d="M5.6 0.2 V2.2 H7.6Z" fill="#d4d4d4"/><path d="M3.9 5.6 L1.78 4.375 A2.45 2.45 0 0 1 6.02 4.375Z" fill="#e0453a"/><path d="M3.9 5.6 L6.02 4.375 A2.45 2.45 0 0 1 3.9 8.05Z" fill="#f7c11a"/><path d="M3.9 5.6 L3.9 8.05 A2.45 2.45 0 0 1 1.78 4.375Z" fill="#2da94f"/><circle cx="3.9" cy="5.6" r="1.05" fill="#3b82f0" stroke="#fff" stroke-width="0.45"/></svg>
<div class="t" style="left:124.92px;top:211.79px;font-size:8.3px;font-weight:400;color:#ffffff;transform:scaleX(0.9491);transform-origin:0 0;">applications</div>
<div class="t" style="left:277.74px;top:211.79px;font-size:8.3px;font-weight:400;color:#e6e6e6;transform:scaleX(0.8973);transform-origin:0 0;">6/15/2022 9:07 PM</div>
<div class="t" style="left:369.53px;top:211.79px;font-size:8.3px;font-weight:400;color:#e6e6e6;transform:scaleX(0.9272);transform-origin:0 0;">Chrome HTML Do...</div>
<div class="t" style="left:473.73px;top:211.79px;font-size:8.3px;font-weight:400;color:#e6e6e6;transform:scaleX(0.8391);transform-origin:0 0;">4 KB</div>
<svg style="left:113.4px;top:229.85px" width="11" height="10" viewBox="0 0 11 10"><path d="M0.2 0.2 H5.6 L7.6 2.2 V9.3 H0.2Z" fill="#f7f7f7"/><path d="M5.6 0.2 V2.2 H7.6Z" fill="#d4d4d4"/><path d="M3.2 3.2 L2.6 7.6 M5.0 3.2 L4.4 7.6 M1.9 4.6 H5.7 M1.7 6.2 H5.5" stroke="#3d8cc4" stroke-width="0.75"/></svg>
<div class="t" style="left:124.69px;top:229.64px;font-size:8.3px;font-weight:400;color:#ffffff;transform:scaleX(1.0233);transform-origin:0 0;">bitnami</div>
<div class="t" style="left:277.74px;top:229.64px;font-size:8.3px;font-weight:400;color:#e6e6e6;transform:scaleX(0.8973);transform-origin:0 0;">6/15/2022 9:07 PM</div>
<div class="t" style="left:369.56px;top:229.64px;font-size:8.3px;font-weight:400;color:#e6e6e6;transform:scaleX(0.8416);transform-origin:0 0;">CSS Source File</div>
<div class="t" style="left:474.01px;top:229.64px;font-size:8.3px;font-weight:400;color:#e6e6e6;transform:scaleX(0.8235);transform-origin:0 0;">1 KB</div>
<svg style="left:112.1px;top:247.50000000000003px" width="11" height="10" viewBox="0 0 11 10"><rect x="0" y="0" width="10.2" height="10" rx="1" fill="#ef7b26"/><path d="M2.4 2.4 Q5.1 4.2 7.8 2.4 Q6.4 5 7.8 7.6 Q5.1 5.8 2.4 7.6 Q3.8 5 2.4 2.4Z" stroke="#fff" stroke-width="1" fill="none" stroke-linejoin="round"/></svg>
<div class="t" style="left:125.10px;top:247.49px;font-size:8.3px;font-weight:400;color:#ffffff;transform:scaleX(0.9572);transform-origin:0 0;">favicon</div>
<div class="t" style="left:277.74px;top:247.49px;font-size:8.3px;font-weight:400;color:#e6e6e6;transform:scaleX(0.8973);transform-origin:0 0;">7/16/2015 8:32 PM</div>
<div class="t" style="left:369.18px;top:247.49px;font-size:8.3px;font-weight:400;color:#e6e6e6;transform:scaleX(0.9010);transform-origin:0 0;">ICO File</div>
<div class="t" style="left:470.05px;top:247.49px;font-size:8.3px;font-weight:400;color:#e6e6e6;transform:scaleX(0.8311);transform-origin:0 0;">31 KB</div>
<svg style="left:113.4px;top:265.55px" width="11" height="10" viewBox="0 0 11 10"><path d="M0.2 0.2 H5.6 L7.6 2.2 V9.3 H0.2Z" fill="#f7f7f7"/><path d="M5.6 0.2 V2.2 H7.6Z" fill="#d4d4d4"/><path d="M1.6 4.6 Q3.9 3.6 6.2 4.6 Q6.4 5.8 5.6 6.3 V7.2 H4.9 V6.5 H3.0 V7.2 H2.3 V6.3 Q1.4 5.8 1.6 4.6Z" fill="#8c66cf"/></svg>
<div class="t" style="left:124.73px;top:265.34px;font-size:8.3px;font-weight:400;color:#ffffff;transform:scaleX(0.9323);transform-origin:0 0;">index</div>
<div class="t" style="left:277.74px;top:265.34px;font-size:8.3px;font-weight:400;color:#e6e6e6;transform:scaleX(0.8973);transform-origin:0 0;">7/16/2015 8:32 PM</div>
<div class="t" style="left:369.28px;top:265.34px;font-size:8.3px;font-weight:400;color:#e6e6e6;transform:scaleX(0.8885);transform-origin:0 0;">PHP Source File</div>
<div class="t" style="left:474.01px;top:265.34px;font-size:8.3px;font-weight:400;color:#e6e6e6;transform:scaleX(0.8235);transform-origin:0 0;">1 KB</div>
<svg style="left:111.8px;top:283.2px" width="11" height="8.5" viewBox="0 0 11 8.5"><path d="M0 1.1 Q0 0 1.1 0 H4.3 Q4.9 0 5.3 0.5 L5.7 1.2 H9.9 Q11 1.2 11 2.3 V7.4 Q11 8.5 9.9 8.5 H1.1 Q0 8.5 0 7.4Z" fill="#e9a90a"/><path d="M0 3.2 Q0 2.2 1 2.2 H4.9 L5.9 1.5 H10 Q11 1.5 11 2.5 V7.5 Q11 8.5 10 8.5 H1 Q0 8.5 0 7.5Z" fill="url(#fg)"/></svg>
<div class="t" style="left:124.90px;top:283.19px;font-size:8.3px;font-weight:400;color:#ffffff;transform:scaleX(0.9865);transform-origin:0 0;">drupal</div>
<div class="t" style="left:277.92px;top:283.19px;font-size:8.3px;font-weight:400;color:#e6e6e6;transform:scaleX(0.8947);transform-origin:0 0;">4/17/2025 3:46 PM</div>
<div class="t" style="left:369.24px;top:283.19px;font-size:8.3px;font-weight:400;color:#e6e6e6;transform:scaleX(0.9438);transform-origin:0 0;">File folder</div>
<div style="left:101.3px;top:277.8px;width:140.6px;height:20.3px;background:transparent;border:1.5px solid #981f23;box-sizing:border-box;"></div>
</body></html>
